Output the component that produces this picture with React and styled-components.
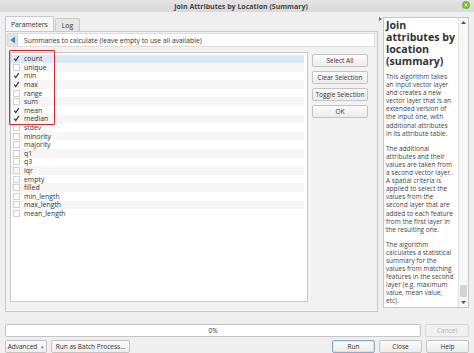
import React from "react";
import styled, { createGlobalStyle } from "styled-components";

const GlobalStyle = createGlobalStyle`
  html, body {
    margin: 0;
    padding: 0;
    background: #efefef;
  }
  body {
    font-family: "Open Sans", "Noto Sans", sans-serif;
    color: #333;
  }
`;

const stats = [
  ["count", true],
  ["unique", false],
  ["min", true],
  ["max", true],
  ["range", false],
  ["sum", false],
  ["mean", true],
  ["median", true],
  ["stdev", false],
  ["minority", false],
  ["majority", false],
  ["q1", false],
  ["q3", false],
  ["iqr", false],
  ["empty", false],
  ["filled", false],
  ["min_length", false],
  ["max_length", false],
  ["mean_length", false],
];

// help text, broken the way the dialog wraps it
const helpParagraphs = [
  [
    "This algorithm takes",
    "an input vector layer",
    "and creates a new",
    "vector layer that is an",
    "extended version of",
    "the input one, with",
    "additional attributes",
    "in its attribute table.",
  ],
  [
    "The additional",
    "attributes and their",
    "values are taken from",
    "a second vector layer.",
    "A spatial criteria is",
    "applied to select the",
    "values from the",
    "second layer that are",
    "added to each feature",
    "from the first layer in",
    "the resulting one.",
  ],
  [
    "The algorithm",
    "calculates a statistical",
    "summary for the",
    "values from matching",
    "features in the second",
    "layer (e.g. maximum",
    "value, mean value,",
    "etc).",
  ],
];

export default function App() {
  return (
    <Window>
      <GlobalStyle />
      <TitleBar>
        <TitleText>Join Attributes by Location (Summary)</TitleText>
        <CloseDot>
          <svg width="8" height="8" viewBox="0 0 8 8">
            <circle cx="4" cy="4" r="4" fill="#7fb842" />
            <path d="M2.6 2.6 L5.4 5.4 M5.4 2.6 L2.6 5.4" stroke="#e8f5d8" strokeWidth="1" />
          </svg>
        </CloseDot>
      </TitleBar>

      <Main>
        <LeftPane>
          <Tabs>
            <Tab active>Parameters</Tab>
            <Tab>Log</Tab>
          </Tabs>
          <TabPanel>
            <HeaderRow>
              <CollapseBtn>
                <svg width="6" height="8" viewBox="0 0 6 8">
                  <path d="M5 0.5 L0.5 4 L5 7.5 Z" fill="#4a7fb8" />
                </svg>
              </CollapseBtn>
              <HeaderLabel>Summaries to calculate (leave empty to use all available)</HeaderLabel>
            </HeaderRow>
            <ListArea>
              <ListBox>
                <Highlight />
                {stats.map(([name, checked], i) => (
                  <Row key={name} odd={i % 2 === 1} selected={i === 0}>
                    <CheckBox checked={checked}>
                      {checked && (
                        <svg width="7" height="7" viewBox="0 0 7 7">
                          <path d="M1.2 3.6 L2.8 5.6 L5.8 1" fill="none" stroke="#222" strokeWidth="1.1" />
                        </svg>
                      )}
                    </CheckBox>
                    <RowLabel>{name}</RowLabel>
                  </Row>
                ))}
              </ListBox>
              <ButtonCol>
                <Button>Select All</Button>
                <Button>Clear Selection</Button>
                <Button>Toggle Selection</Button>
                <Button>OK</Button>
              </ButtonCol>
            </ListArea>
          </TabPanel>
        </LeftPane>

        <Splitter>
          <svg width="3" height="4" viewBox="0 0 3 4">
            <path d="M0 0 L3 2 L0 4 Z" fill="#666" />
          </svg>
        </Splitter>

        <HelpPane>
          <HelpText>
            <HelpTitle>Join attributes by location (summary)</HelpTitle>
            {helpParagraphs.map((lines) => (
              <HelpPara key={lines[0] + lines[1]}>
                {lines.map((l) => (
                  <HelpLine key={l}>{l}</HelpLine>
                ))}
              </HelpPara>
            ))}
          </HelpText>
          <ScrollBar>
            <ScrollArrow>
              <svg width="5" height="3" viewBox="0 0 5 3">
                <path d="M0 3 L2.5 0 L5 3 Z" fill="#555" />
              </svg>
            </ScrollArrow>
            <ScrollTrack>
              <ScrollThumb />
            </ScrollTrack>
            <ScrollArrow>
              <svg width="5" height="3" viewBox="0 0 5 3">
                <path d="M0 0 L2.5 3 L5 0 Z" fill="#555" />
              </svg>
            </ScrollArrow>
          </ScrollBar>
        </HelpPane>
      </Main>

      <ProgressRow>
        <Progress>0%</Progress>
        <Button disabled wide="44px">Cancel</Button>
      </ProgressRow>

      <FooterRow>
        <FooterGroup>
          <Button wide="42px">
            Advanced <Caret>▾</Caret>
          </Button>
          <Button wide="79px">Run as Batch Process…</Button>
        </FooterGroup>
        <FooterGroup>
          <Button primary wide="43px">Run</Button>
          <Button wide="43px">Close</Button>
          <Button wide="43px">Help</Button>
        </FooterGroup>
      </FooterRow>
    </Window>
  );
}

const Window = styled.div`
  width: 474px;
  height: 353px;
  display: flex;
  flex-direction: column;
  background: #efefef;
  overflow: hidden;
`;

const TitleBar = styled.div`
  height: 12px;
  display: flex;
  align-items: center;
  justify-content: center;
  position: relative;
  background: linear-gradient(#e4e4e4, #d9d9d9);
`;

const TitleText = styled.div`
  font-size: 7px;
  font-weight: 700;
  color: #444;
  padding-left: 8px;
`;

const CloseDot = styled.div`
  position: absolute;
  right: 4px;
  top: 1px;
  display: flex;
`;

const Main = styled.div`
  display: flex;
  padding: 4px 4px 0 5px;
  height: 296px;
`;

const LeftPane = styled.div`
  width: 373px;
  display: flex;
  flex-direction: column;
`;

const Tabs = styled.div`
  display: flex;
  height: 15px;
  align-items: flex-end;
`;

const Tab = styled.div`
  height: ${(p) => (p.active ? "15px" : "13px")};
  padding: 0 ${(p) => (p.active ? "5px" : "6px")};
  margin-right: 1px;
  display: flex;
  align-items: center;
  font-size: 6.8px;
  color: #333;
  border: 1px solid #c9c9c9;
  border-bottom: none;
  border-radius: 2px 2px 0 0;
  box-sizing: border-box;
  background: ${(p) => (p.active ? "#f7f7f7" : "#e6e6e6")};
`;

const TabPanel = styled.div`
  flex: 1;
  border: 1px solid #c9c9c9;
  background: #f2f2f2;
  display: flex;
  flex-direction: column;
  padding: 1px 1px 4px 1px;
`;

const HeaderRow = styled.div`
  height: 12px;
  display: flex;
  align-items: center;
  background: #fff;
  border: 1px solid #dcdcdc;
  margin-right: 1px;
`;

const CollapseBtn = styled.div`
  width: 9px;
  height: 100%;
  display: flex;
  align-items: center;
  justify-content: center;
  background: #e3e3e3;
  border-right: 1px solid #d0d0d0;
`;

const HeaderLabel = styled.div`
  font-size: 6.8px;
  padding-left: 6px;
  color: #333;
`;

const ListArea = styled.div`
  flex: 1;
  display: flex;
  gap: 4px;
  padding: 5px 0 0 3px;
`;

const ListBox = styled.div`
  width: 298px;
  height: 250px;
  background: #fff;
  border: 1px solid #c8c8c8;
  padding-top: 1.5px;
  position: relative;
  box-sizing: border-box;
`;

const Highlight = styled.div`
  position: absolute;
  left: -2px;
  top: -3px;
  width: 44px;
  height: 73px;
  border: 1.5px solid #d8262e;
  border-radius: 1px;
  z-index: 2;
`;

const Row = styled.div`
  height: 8.6px;
  display: flex;
  align-items: center;
  background: ${(p) => (p.selected ? "#dbe8f5" : p.odd ? "#f6f6f6" : "#fff")};
  margin-right: 3px;
`;

const CheckBox = styled.div`
  width: 7px;
  height: 7px;
  margin-left: 2px;
  box-sizing: border-box;
  border: 1px solid ${(p) => (p.checked ? "transparent" : "#d2d2d2")};
  background: ${(p) => (p.checked ? "transparent" : "#fff")};
  display: flex;
  align-items: center;
  justify-content: center;
  & svg {
    margin: -1px;
  }
`;

const RowLabel = styled.div`
  font-size: 6.9px;
  margin-left: 4px;
  color: #333;
`;

const ButtonCol = styled.div`
  width: 56px;
  display: flex;
  flex-direction: column;
  gap: 4px;
  padding-top: 2px;
`;

const Button = styled.div`
  height: 13px;
  width: ${(p) => p.wide || "auto"};
  box-sizing: border-box;
  display: flex;
  align-items: center;
  justify-content: center;
  font-size: 6.5px;
  color: ${(p) => (p.disabled ? "#b3b3b3" : "#333")};
  white-space: nowrap;
  border: 1px solid ${(p) => (p.primary ? "#8fa9c6" : p.disabled ? "#d6d6d6" : "#c4c4c4")};
  border-radius: 2px;
  background: ${(p) =>
    p.disabled ? "#f0f0f0" : "linear-gradient(#fbfbfb, #ececec)"};
  box-shadow: ${(p) => (p.primary ? "inset 0 0 0 1px #d6e3f1" : "none")};
`;

const Caret = styled.span`
  font-size: 5px;
  margin-left: 4px;
  color: #777;
`;

const Splitter = styled.div`
  width: 6px;
  display: flex;
  justify-content: center;
  padding-top: 1px;
  margin-left: -1px;
`;

const HelpPane = styled.div`
  width: 86px;
  height: 291px;
  margin-top: 1px;
  display: flex;
  background: #fff;
  border: 1px solid #c8c8c8;
  box-sizing: border-box;
`;

const HelpText = styled.div`
  flex: 1;
  padding: 0 0 0 2px;
  overflow: hidden;
`;

const HelpTitle = styled.div`
  font-size: 10.6px;
  font-weight: 700;
  line-height: 12px;
  color: #333;
  margin-top: 1px;
  margin-bottom: 6px;
`;

const HelpPara = styled.div`
  margin: 0 0 7px 0;
  font-size: 6.5px;
  line-height: 8.1px;
  color: #444;
`;

const HelpLine = styled.div`
  white-space: nowrap;
`;

const ScrollBar = styled.div`
  width: 9px;
  display: flex;
  flex-direction: column;
  border-left: 1px solid #e2e2e2;
  background: #f7f7f7;
`;

const ScrollArrow = styled.div`
  height: 9px;
  display: flex;
  align-items: center;
  justify-content: center;
`;

const ScrollTrack = styled.div`
  flex: 1;
  display: flex;
  flex-direction: column;
  justify-content: flex-end;
`;

const ScrollThumb = styled.div`
  height: 12px;
  margin: 0 1px 1px;
  background: #d3d3d3;
  border-radius: 1px;
`;

const ProgressRow = styled.div`
  display: flex;
  gap: 4px;
  padding: 0 5px;
  margin-top: 12px;
  height: 13px;
`;

const Progress = styled.div`
  flex: 1;
  background: #fff;
  border: 1px solid #c4c4c4;
  border-radius: 2px;
  display: flex;
  align-items: center;
  justify-content: center;
  font-size: 6.5px;
  color: #333;
`;

const FooterRow = styled.div`
  display: flex;
  justify-content: space-between;
  padding: 0 5px;
  margin-top: 3px;
`;

const FooterGroup = styled.div`
  display: flex;
  gap: 4px;
`;
